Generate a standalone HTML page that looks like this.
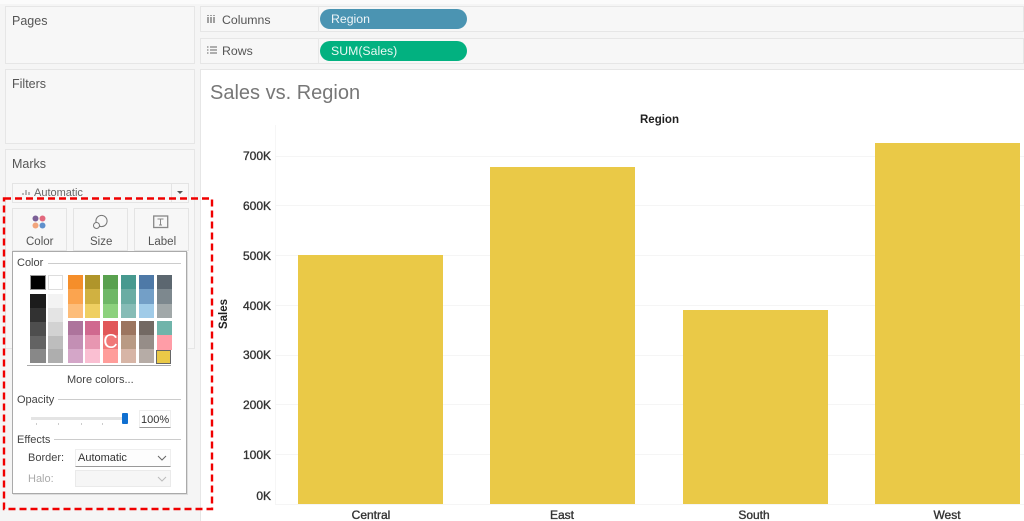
<!DOCTYPE html>
<html><head><meta charset="utf-8"><style>
html,body{margin:0;padding:0;background:#fff}
#p{position:relative;width:1024px;height:521px;overflow:hidden;background:#f5f5f5;font-family:"Liberation Sans",sans-serif;color:#555;filter:blur(.35px)}
#p div{position:absolute;box-sizing:border-box}
.t{white-space:nowrap;line-height:14px}
.pn{background:#f7f7f7;border:1px solid #e6e6e6}
.ax{font-size:12px;color:#333;text-align:right;width:44px;left:227px;-webkit-text-stroke:.35px #333}
.g{left:275px;width:749px;height:1px;background:#f5f5f5}
.b{background:#eac947;width:145px}
.xl{font-size:12px;color:#333;text-align:center;width:120px;top:508px;-webkit-text-stroke:.35px #333}
.btn{background:#f7f7f7;border:1px solid #e4e4e4;top:208px;width:55px;height:43px}
.s{width:15px;height:14.4px}
.ln{height:1px;background:#ccc}
</style></head><body><div id="p">
<div style="left:0;top:0;width:1024px;height:4px;background:#fbfbfb"></div>
<div class="pn" style="left:5px;top:6px;width:190px;height:58px"></div>
<div class="t" style="left:12px;top:14px;font-size:12.5px">Pages</div>
<div class="pn" style="left:5px;top:69px;width:190px;height:75px"></div>
<div class="t" style="left:12px;top:77px;font-size:12.5px">Filters</div>
<div class="pn" style="left:5px;top:149px;width:190px;height:200px"></div>
<div class="t" style="left:12px;top:157px;font-size:12.5px">Marks</div>
<div style="left:200px;top:6px;width:824px;height:26px;background:#f7f7f7;border:1px solid #e6e6e6"></div>
<div style="left:200px;top:38px;width:824px;height:26px;background:#f7f7f7;border:1px solid #e6e6e6"></div>
<div style="left:318px;top:7px;width:1px;height:56px;background:#e8e8e8"></div>
<div style="left:318px;top:32px;width:1px;height:6px;background:#f5f5f5"></div>
<svg style="position:absolute;left:207px;top:15px" width="8" height="8"><path d="M1 2v6M4 2v6M7 2v6M1 0v1M4 0v1M7 0v1" stroke="#666" stroke-width="1.2" fill="none"/></svg>
<div class="t" style="left:222px;top:13px;font-size:12.3px">Columns</div>
<svg style="position:absolute;left:207px;top:46px" width="10" height="9"><path d="M0 1h1.5M3 1h7M0 4h1.5M3 4h7M0 7h1.5M3 7h7" stroke="#666" stroke-width="1.1" fill="none"/></svg>
<div class="t" style="left:222px;top:44px;font-size:12.3px">Rows</div>
<div style="left:320px;top:9px;width:147px;height:20px;border-radius:10px;background:#4b94b2"></div>
<div class="t" style="left:331px;top:12px;font-size:12.3px;color:#eef5f8">Region</div>
<div style="left:320px;top:41px;width:147px;height:20px;border-radius:10px;background:#02b180"></div>
<div class="t" style="left:331px;top:44px;font-size:12.3px;color:#e9f8f3">SUM(Sales)</div>

<div style="left:200px;top:69px;width:824px;height:452px;background:#fff;border-left:1px solid #e6e6e6;border-top:1px solid #e6e6e6"></div>
<div class="t" style="left:210px;top:82px;font-size:20px;line-height:23px;color:#777">Sales vs. Region</div>
<div class="t" style="left:640px;top:113px;font-size:11.5px;font-weight:bold;color:#222">Region</div>
<div style="left:275px;top:125px;width:1px;height:380px;background:#f6f6f6"></div>
<div class="g" style="top:156px"></div><div class="g" style="top:205px"></div><div class="g" style="top:255px"></div><div class="g" style="top:305px"></div><div class="g" style="top:355px"></div><div class="g" style="top:404px"></div><div class="g" style="top:454px"></div><div class="g" style="top:504px"></div>
<div class="t ax" style="top:149px">700K</div><div class="t ax" style="top:199px">600K</div><div class="t ax" style="top:249px">500K</div><div class="t ax" style="top:299px">400K</div><div class="t ax" style="top:348px">300K</div><div class="t ax" style="top:398px">200K</div><div class="t ax" style="top:448px">100K</div><div class="t ax" style="top:489px">0K</div>
<div class="t" style="left:206px;top:307px;width:36px;text-align:center;font-size:11.5px;font-weight:bold;color:#222;transform:rotate(-90deg)">Sales</div>
<div class="b" style="left:298px;top:255px;height:249px"></div>
<div class="b" style="left:490px;top:167px;height:337px"></div>
<div class="b" style="left:683px;top:310px;height:194px"></div>
<div class="b" style="left:875px;top:143px;height:361px"></div>
<div class="t xl" style="left:311px">Central</div><div class="t xl" style="left:502px">East</div><div class="t xl" style="left:694px">South</div><div class="t xl" style="left:887px">West</div>

<div style="left:12px;top:183px;width:177px;height:20px;background:#f8f8f8;border:1px solid #e4e4e4"></div>
<div style="left:171px;top:184px;width:1px;height:18px;background:#e4e4e4"></div>
<svg style="position:absolute;left:22px;top:189px" width="8" height="7"><path d="M1 6V4M4 6V1M7 6V3" stroke="#999" stroke-width="1.4" fill="none"/></svg>
<div class="t" style="left:34px;top:186px;font-size:11px;color:#666">Automatic</div>
<div style="left:177px;top:191px;width:0;height:0;border:3px solid transparent;border-top:3px solid #555"></div>

<div class="btn" style="left:12px"></div><div class="btn" style="left:73px"></div><div class="btn" style="left:134px"></div>
<svg style="position:absolute;left:31px;top:214px" width="16" height="16"><circle cx="4.5" cy="4.5" r="3" fill="#7b5f96"/><circle cx="11.5" cy="4.5" r="3" fill="#e2687d"/><circle cx="4.5" cy="11.5" r="3" fill="#f2a57c"/><circle cx="11.5" cy="11.5" r="3" fill="#5f90cc"/></svg>
<svg style="position:absolute;left:92px;top:214px" width="17" height="16"><circle cx="9.5" cy="7" r="5.6" fill="none" stroke="#777"/><circle cx="4.5" cy="11.5" r="3" fill="#f7f7f7" stroke="#777"/></svg>
<svg style="position:absolute;left:153px;top:215px" width="16" height="14"><rect x=".7" y="1" width="14" height="11.5" fill="none" stroke="#888" stroke-width="1.3"/><path d="M4.5 4h6M7.5 4v6M6 10h3" stroke="#888" fill="none"/></svg>
<div class="t" style="left:26px;top:235px;font-size:11.5px">Color</div>
<div class="t" style="left:90px;top:235px;font-size:11.5px">Size</div>
<div class="t" style="left:148px;top:235px;font-size:11.5px">Label</div>

<div style="left:12px;top:251px;width:175px;height:243px;background:#fff;border:1px solid #aaa;box-shadow:1px 1px 0 #ddd"></div>
<div class="t" style="left:17px;top:256px;font-size:11px;color:#444">Color</div>
<div class="ln" style="left:48px;top:263px;width:133px"></div>

<div style="left:30px;top:275px;width:16px;height:15px;background:#000;border:1px solid #999"></div>
<div style="left:48px;top:275px;width:15px;height:15px;background:#fff;border:1px solid #ddd"></div>
<div class="s" style="left:30px;top:294px;background:#1c1c1c;width:16px;height:14px"></div><div class="s" style="left:30px;top:308px;background:#323232;width:16px;height:14px"></div><div class="s" style="left:30px;top:322px;background:#4e4e4e;width:16px;height:14px"></div><div class="s" style="left:30px;top:336px;background:#636363;width:16px;height:13px"></div><div class="s" style="left:30px;top:349px;background:#888;width:16px;height:14px"></div>
<div class="s" style="left:48px;top:294px;background:#f3f3f3;height:14px"></div><div class="s" style="left:48px;top:308px;background:#e4e4e4;height:14px"></div><div class="s" style="left:48px;top:322px;background:#d2d2d2;height:14px"></div><div class="s" style="left:48px;top:336px;background:#bdbdbd;height:13px"></div><div class="s" style="left:48px;top:349px;background:#aeaeae;height:14px"></div>

<div class="s" style="left:68px;top:275px;background:#f58e2a"></div><div class="s" style="left:68px;top:289.4px;background:#fba44f"></div><div class="s" style="left:68px;top:303.8px;background:#fdbd7a"></div>
<div class="s" style="left:85px;top:275px;background:#b0952a"></div><div class="s" style="left:85px;top:289.4px;background:#d0b141"></div><div class="s" style="left:85px;top:303.8px;background:#efcf61"></div>
<div class="s" style="left:103px;top:275px;background:#59a14f"></div><div class="s" style="left:103px;top:289.4px;background:#6eb766"></div><div class="s" style="left:103px;top:303.8px;background:#8cd17d"></div>
<div class="s" style="left:121px;top:275px;background:#47998f"></div><div class="s" style="left:121px;top:289.4px;background:#6aaca3"></div><div class="s" style="left:121px;top:303.8px;background:#86bcb6"></div>
<div class="s" style="left:139px;top:275px;background:#4e79a7"></div><div class="s" style="left:139px;top:289.4px;background:#739fc7"></div><div class="s" style="left:139px;top:303.8px;background:#a0cbe8"></div>
<div class="s" style="left:157px;top:275px;background:#5c6770"></div><div class="s" style="left:157px;top:289.4px;background:#7d888e"></div><div class="s" style="left:157px;top:303.8px;background:#a1a8a9"></div>

<div class="s" style="left:68px;top:321px;background:#ad749c"></div><div class="s" style="left:68px;top:335.4px;background:#c38fb4"></div><div class="s" style="left:68px;top:349px;background:#d4a6c8"></div>
<div class="s" style="left:85px;top:321px;background:#d0698f"></div><div class="s" style="left:85px;top:335.4px;background:#e796b1"></div><div class="s" style="left:85px;top:349px;background:#fabfd2"></div>
<div class="s" style="left:103px;top:321px;background:#e15759"></div><div class="s" style="left:103px;top:335.4px;background:#f07878"></div><div class="s" style="left:103px;top:349px;background:#ff9d9a"></div>
<div class="t" style="left:103px;top:335px;width:15px;text-align:center;font-size:20px;color:#fff">C</div>
<div class="s" style="left:121px;top:321px;background:#9c755f"></div><div class="s" style="left:121px;top:335.4px;background:#b99a84"></div><div class="s" style="left:121px;top:349px;background:#d7b5a6"></div>
<div class="s" style="left:139px;top:321px;background:#736963"></div><div class="s" style="left:139px;top:335.4px;background:#968d88"></div><div class="s" style="left:139px;top:349px;background:#b6aca6"></div>
<div class="s" style="left:157px;top:321px;background:#70b4aa"></div><div class="s" style="left:157px;top:335.4px;background:#ff9da7"></div><div class="s" style="left:156px;top:350px;background:#eac947;border:1px solid #666;height:14px"></div>
<div style="left:27px;top:365px;width:144px;height:1px;background:#aaa"></div>
<div class="t" style="left:67px;top:373px;font-size:11px;color:#444">More colors...</div>

<div class="t" style="left:17px;top:393px;font-size:11px;color:#444">Opacity</div>
<div class="ln" style="left:58px;top:399px;width:123px"></div>
<div style="left:31px;top:417px;width:97px;height:3px;background:#e4e4e4"></div>
<div style="left:122px;top:413px;width:6px;height:11px;background:#0f6fd0;border-radius:1px"></div>
<div style="left:36px;top:423px;width:1px;height:2px;background:#ccc"></div><div style="left:58px;top:423px;width:1px;height:2px;background:#ccc"></div><div style="left:81px;top:423px;width:1px;height:2px;background:#ccc"></div><div style="left:102px;top:423px;width:1px;height:2px;background:#ccc"></div>
<div style="left:139px;top:410px;width:32px;height:18px;background:#fff;border:1px solid #eee;border-bottom:1px solid #999"></div>
<div class="t" style="left:141px;top:413px;font-size:11px;color:#333">100%</div>

<div class="t" style="left:17px;top:433px;font-size:11px;color:#444">Effects</div>
<div class="ln" style="left:54px;top:439px;width:127px"></div>
<div class="t" style="left:28px;top:451px;font-size:11px;color:#444">Border:</div>
<div style="left:75px;top:449px;width:96px;height:18px;background:#fdfdfd;border:1px solid #eee;border-bottom:1px solid #999"></div>
<div class="t" style="left:78px;top:451px;font-size:11px;color:#333">Automatic</div>
<svg style="position:absolute;left:157px;top:455px" width="10" height="6"><path d="M1 1l4 4 4-4" stroke="#666" fill="none"/></svg>
<div class="t" style="left:28px;top:472px;font-size:11px;color:#aaa">Halo:</div>
<div style="left:75px;top:470px;width:96px;height:17px;background:#f6f6f6;border:1px solid #eaeaea"></div>
<svg style="position:absolute;left:157px;top:476px" width="10" height="6"><path d="M1 1l4 4 4-4" stroke="#bbb" fill="none"/></svg>

<svg style="position:absolute;left:0;top:0" width="1024" height="521"><rect x="4" y="198.5" width="208" height="310.5" fill="none" stroke="#f00000" stroke-width="2.4" stroke-dasharray="7 4"/></svg>
</div></body></html>
